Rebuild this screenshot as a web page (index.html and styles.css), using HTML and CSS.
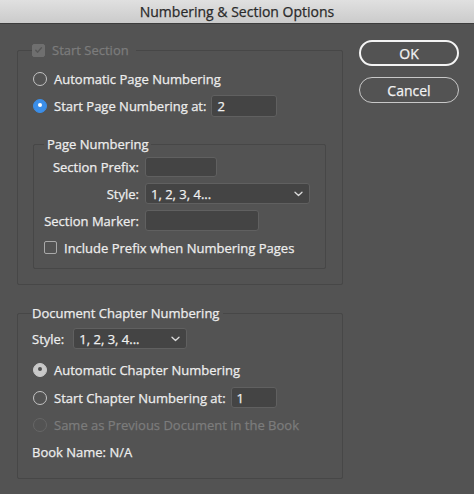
FILE: index.html
```html
<!DOCTYPE html>
<html>
<head>
<meta charset="utf-8">
<link rel="stylesheet" href="styles.css">
</head>
<body>
<div class="window">
  <div class="titlebar">Numbering &amp; Section Options</div>
  <div class="body">
    <div class="main">
      <fieldset class="group outer">
        <legend class="outer-legend">
          <span class="checkbox disabled">
            <svg width="12" height="12" viewBox="0 0 12 12"><path d="M3 6.2 L5.1 8.3 L9.2 3.6" fill="none" stroke="#575757" stroke-width="1.6" stroke-linecap="round" stroke-linejoin="round"/></svg>
          </span>
          <span class="muted">Start Section</span>
        </legend>
        <div class="row"><span class="radio"></span><span>Automatic Page Numbering</span></div>
        <div class="row"><span class="radio blue"></span><span>Start Page Numbering at:</span><span class="field start-page">2</span></div>
        <fieldset class="group inner">
          <legend class="inner-legend">Page Numbering</legend>
          <div class="form-grid">
            <span class="label">Section Prefix:</span><span class="field prefix"></span>
            <span class="label">Style:</span>
            <span class="select page-style">1, 2, 3, 4...<svg class="chev" width="9" height="6" viewBox="0 0 9 6"><path d="M1 1.2 L4.5 4.5 L8 1.2" fill="none" stroke="#dcdcdc" stroke-width="1.3" stroke-linecap="round" stroke-linejoin="round"/></svg></span>
            <span class="label">Section Marker:</span><span class="field marker"></span>
          </div>
          <div class="row check-row"><span class="checkbox"></span><span>Include Prefix when Numbering Pages</span></div>
        </fieldset>
      </fieldset>

      <fieldset class="group chapter">
        <legend class="chapter-legend">Document Chapter Numbering</legend>
        <div class="row style-row"><span>Style:</span>
          <span class="select chapter-style">1, 2, 3, 4...<svg class="chev" width="9" height="6" viewBox="0 0 9 6"><path d="M1 1.2 L4.5 4.5 L8 1.2" fill="none" stroke="#dcdcdc" stroke-width="1.3" stroke-linecap="round" stroke-linejoin="round"/></svg></span>
        </div>
        <div class="row auto-row"><span class="radio grey"></span><span>Automatic Chapter Numbering</span></div>
        <div class="row"><span class="radio"></span><span>Start Chapter Numbering at:</span><span class="field chapter-start">1</span></div>
        <div class="row"><span class="radio off"></span><span class="muted">Same as Previous Document in the Book</span></div>
        <div class="row"><span>Book Name: N/A</span></div>
      </fieldset>
    </div>
    <div class="buttons">
      <div class="btn default">OK</div>
      <div class="btn">Cancel</div>
    </div>
  </div>
</div>
</body>
</html>
```

FILE: styles.css
```css
html, body {
  margin: 0;
  padding: 0;
  background: #535353;
}
.window {
  width: 474px;
  height: 494px;
  background: #535353;
  font-family: "Open Sans", "DejaVu Sans", sans-serif;
  font-size: 13px;
  color: #ededed;
  -webkit-text-stroke: 0.25px currentColor;
  overflow: hidden;
}
.titlebar {
  height: 23px;
  line-height: 24px;
  text-align: center;
  font-size: 14px;
  color: #2a2a2a;
  background: linear-gradient(#e0e0e0, #cbcbcb);
  border-bottom: 1px solid #3c3c3c;
}
.body {
  display: flex;
  padding-top: 16px;
}
.main {
  width: 326px;
  margin-left: 17px;
  padding-top: 2px;
}
.group {
  margin: 0;
  border: 1px solid #474747;
  border-radius: 2px;
  min-width: 0;
}
.outer {
  padding: 7px 16px 15px 14px;
}
.outer-legend {
  padding: 0 7px 0 0;
  height: 16px;
  display: flex;
  align-items: center;
  gap: 7px;
}
.muted { color: #7c7c7c; }
.row {
  display: flex;
  align-items: center;
  height: 27px;
  white-space: nowrap;
}
.radio {
  box-sizing: border-box;
  width: 14px;
  height: 14px;
  border-radius: 50%;
  border: 1.5px solid #c4c4c4;
  margin: 0 7px 0 1px;
  flex: none;
  position: relative;
}
.radio.blue {
  background: #3b8ee8;
  border-color: #3b8ee8;
}
.radio.blue::after, .radio.grey::after {
  content: "";
  position: absolute;
  left: 3.5px;
  top: 3.5px;
  width: 4px;
  height: 4px;
  border-radius: 50%;
  background: #fff;
}
.radio.grey {
  background: #c9c9c9;
  border-color: #c9c9c9;
}
.radio.grey::after { background: #4e4e4e; }
.radio.off { border-color: #666; }
.field, .select {
  box-sizing: border-box;
  background: #444;
  border: 1px solid #606060;
  border-radius: 3px;
  color: #f0f0f0;
  display: flex;
  align-items: center;
  padding-left: 5px;
}
.start-page { width: 66px; height: 22px; margin-left: 5px; }
.inner {
  margin: 17px 0 0 1px;
  padding: 1px 8px 7px 10px;
}
.inner-legend {
  padding: 0 3px;
  height: 16px;
  line-height: 16px;
}
.form-grid {
  display: grid;
  grid-template-columns: 95px auto;
  grid-auto-rows: 27px;
  column-gap: 6px;
  align-items: center;
  justify-items: start;
}
.label { justify-self: end; white-space: nowrap; }
.prefix { width: 72px; height: 20px; }
.page-style { width: 165px; height: 21px; }
.marker { width: 114px; height: 21px; }
.select { justify-content: space-between; padding-right: 6px; }
.chev { flex: none; }
.checkbox {
  box-sizing: border-box;
  width: 13px;
  height: 13px;
  border: 1px solid #a9a9a9;
  border-radius: 2px;
  margin-right: 7px;
  flex: none;
  display: flex;
  align-items: center;
  justify-content: center;
}
.checkbox.disabled {
  background: #6f6f6f;
  border-color: #6f6f6f;
  margin-right: 0;
}
.check-row .checkbox { margin-left: 0; }
.chapter {
  margin-top: 20px;
  padding: 4px 16px 13px 14px;
}
.chapter-legend {
  padding: 0 4px 0 0;
  height: 16px;
  line-height: 16px;
}
.style-row { margin-bottom: 4px; }
.auto-row { margin-bottom: 1px; }
.chapter-style { width: 114px; height: 21px; margin-left: 9px; }
.chapter-start { width: 46px; height: 21px; margin-left: 5px; }
.buttons {
  margin-left: 16px;
  display: flex;
  flex-direction: column;
  gap: 11px;
}
.btn {
  box-sizing: border-box;
  width: 100px;
  height: 26px;
  border-radius: 13px;
  border: 1.5px solid #c8c8c8;
  display: flex;
  align-items: center;
  justify-content: center;
  font-size: 14px;
  color: #f2f2f2;
}
.btn.default {
  border: 2px solid #f4f4f4;
}
```
